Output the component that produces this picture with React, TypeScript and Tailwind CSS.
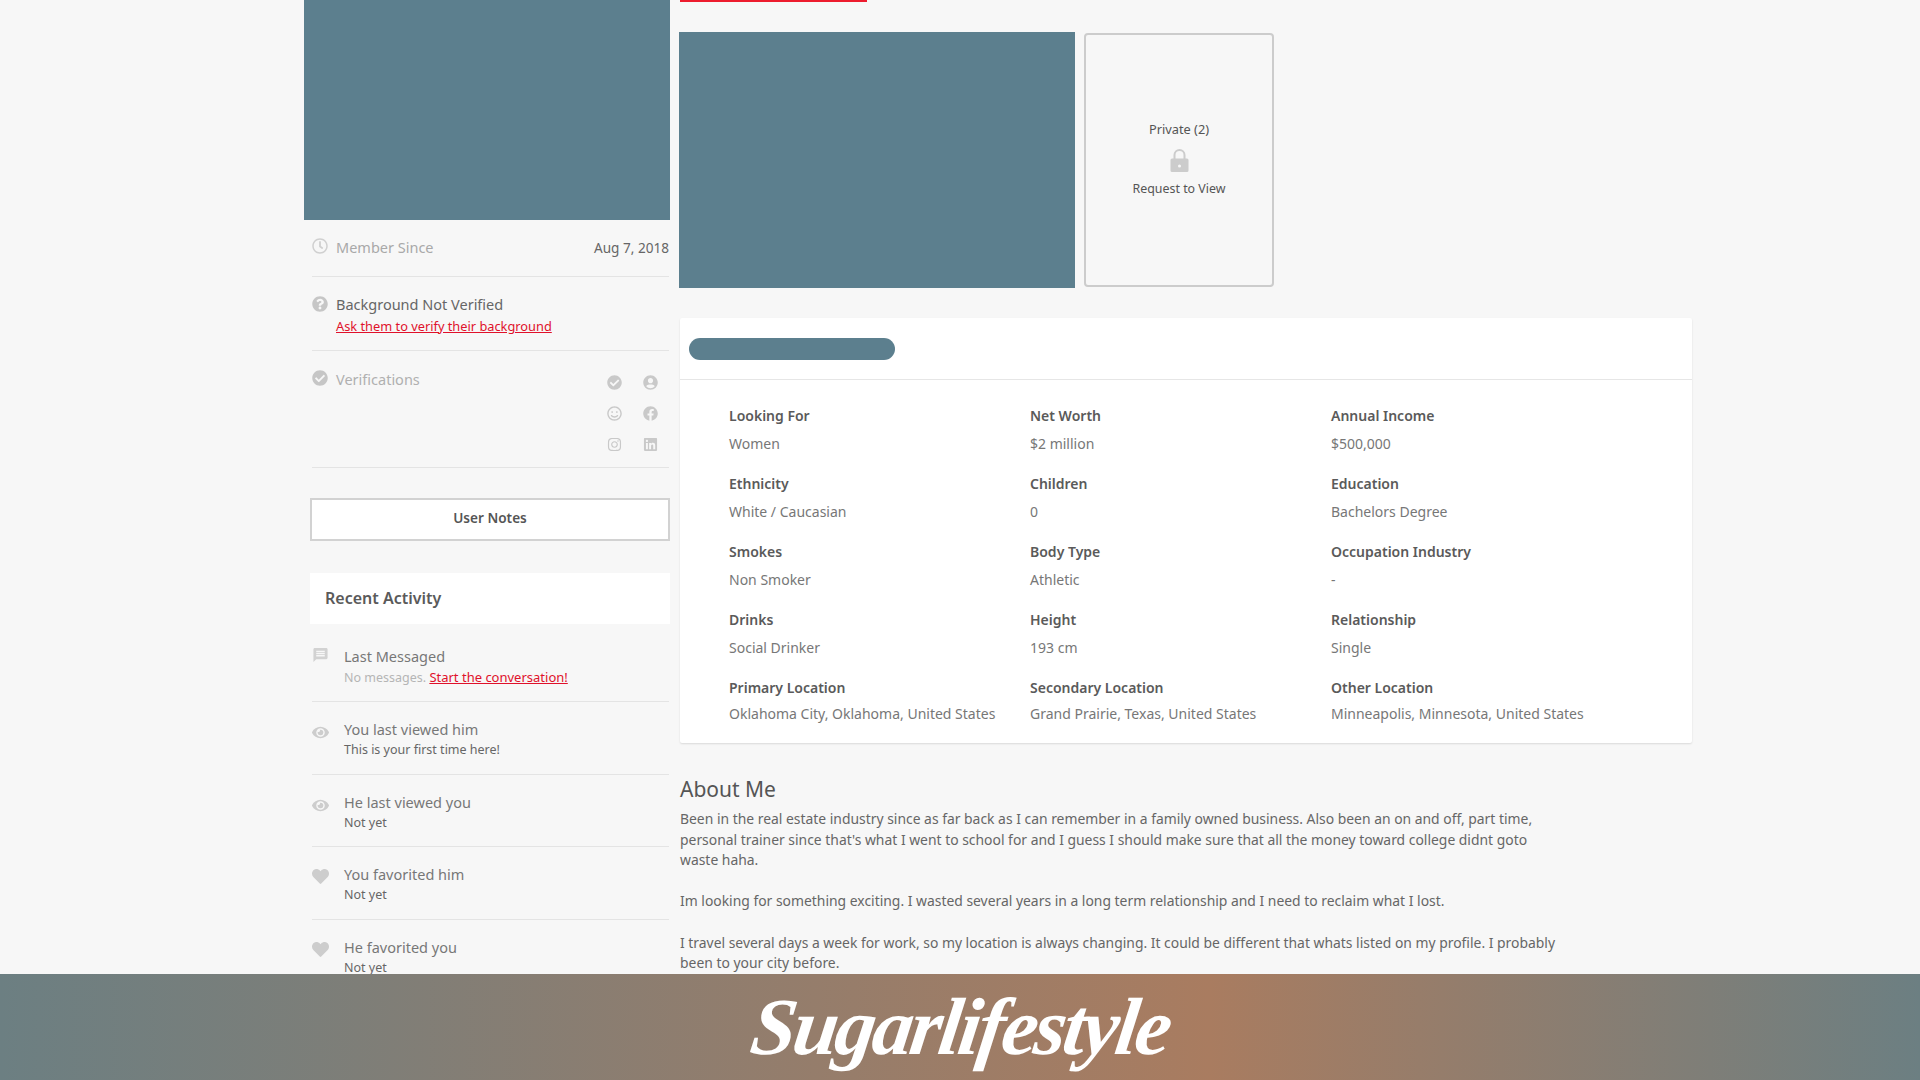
import { FaCheckCircle, FaEye, FaFacebook, FaHeart, FaInstagram, FaLinkedin, FaQuestionCircle, FaRegClock, FaRegSmile, FaUserCircle } from "react-icons/fa";
import { MdMessage } from "react-icons/md";

const details = [
  ["Looking For", "Women", "Net Worth", "$2 million", "Annual Income", "$500,000"],
  ["Ethnicity", "White / Caucasian", "Children", "0", "Education", "Bachelors Degree"],
  ["Smokes", "Non Smoker", "Body Type", "Athletic", "Occupation Industry", "-"],
  ["Drinks", "Social Drinker", "Height", "193 cm", "Relationship", "Single"],
  ["Primary Location", "Oklahoma City, Oklahoma, United States", "Secondary Location", "Grand Prairie, Texas, United States", "Other Location", "Minneapolis, Minnesota, United States"],
];

const activity = [
  { icon: <FaEye size={17} className="mt-[1px]" />, title: "You last viewed him", sub: "This is your first time here!" },
  { icon: <FaEye size={17} className="mt-[1px]" />, title: "He last viewed you", sub: "Not yet" },
  { icon: <FaHeart size={17} />, title: "You favorited him", sub: "Not yet" },
  { icon: <FaHeart size={17} />, title: "He favorited you", sub: "Not yet" },
];

function Sidebar() {
  return (
    <aside className="w-[366px] shrink-0">
      <div className="h-[220px] bg-[#5c7f8e]" />
      <div className="ml-[8px] mr-[1px]">
        <div className="flex h-[57px] items-center justify-between border-b border-[#e4e4e4]">
          <div className="flex items-center gap-[8px] text-[14.5px] text-[#a9a9a9]">
            <FaRegClock size={16} className="mb-[4px] text-[#d0d0d0]" />
            <span>Member Since</span>
          </div>
          <span className="text-[13.6px] text-[#666]">Aug 7, 2018</span>
        </div>
        <div className="flex h-[74px] items-start gap-[8px] border-b border-[#e4e4e4] pt-[19px]">
          <FaQuestionCircle size={16} className="text-[#c6c6c6]" />
          <div className="-mt-[2px]">
            <div className="text-[14.5px] leading-[21px] text-[#666]">Background Not Verified</div>
            <a className="mt-[1px] block text-[12.8px] leading-[21px] text-[#e0112b] underline">Ask them to verify their background</a>
          </div>
        </div>
        <div className="flex h-[117px] justify-between border-b border-[#e4e4e4] pt-[19px]">
          <div className="flex items-start gap-[8px] text-[14.5px] text-[#b0b0b0]">
            <FaCheckCircle size={16} className="text-[#c6c6c6]" />
            <span className="-mt-[1px]">Verifications</span>
          </div>
          <div className="mr-[11px] mt-[5px] grid grid-cols-2 gap-x-[21px] gap-y-[16px] self-start text-[#c9c9c9]">
            <FaCheckCircle size={15} />
            <FaUserCircle size={15} />
            <FaRegSmile size={15} />
            <FaFacebook size={15} />
            <FaInstagram size={15} />
            <FaLinkedin size={15} />
          </div>
        </div>
      </div>
      <div className="ml-[6px] mt-[30px] flex h-[43px] items-center justify-center border-2 border-[#d2d2d2] bg-white pb-[2px] text-[13.6px] font-semibold text-[#555]">User Notes</div>
      <div className="ml-[6px] mt-[32px] flex h-[51px] items-center bg-white pb-[1px] pl-[15px] text-[16px] font-semibold text-[#5a5a5a]">Recent Activity</div>
      <div className="ml-[8px] mr-[1px]">
        <div className="flex h-[78px] items-start gap-[15px] border-b border-[#e4e4e4] pt-[23px]">
          <MdMessage size={18} className="-mt-[1px] w-[17px] text-[#d2d2d2]" />
          <div className="-mt-[1px]">
            <div className="text-[14.5px] leading-[20px] text-[#777]">Last Messaged</div>
            <div className="mt-[1px] text-[12.5px] leading-[20px] text-[#b5b5b5]">No messages. <a className="text-[13px] text-[#e0112b] underline">Start the conversation!</a></div>
          </div>
        </div>
        {activity.map((a) => (
          <div key={a.title} className="flex h-[72.6px] items-start gap-[15px] border-b border-[#e4e4e4] pt-[18px] last:border-b-0">
            <div className="mt-[3px] w-[17px] text-[#cdcdcd]">{a.icon}</div>
            <div className="-mt-[1px]">
              <div className="text-[14.5px] leading-[20px] text-[#777]">{a.title}</div>
              <div className="mt-[1px] text-[12.5px] leading-[20px] text-[#666]">{a.sub}</div>
            </div>
          </div>
        ))}
      </div>
    </aside>
  );
}

function Content() {
  return (
    <main className="ml-[10px] w-[1012px]">
      <div className="h-[2px] w-[187px] bg-[#ed1c2e]" />
      <div className="-ml-[1px] mt-[30px] flex h-[256px] gap-[9px]">
        <div className="w-[396px] bg-[#5c7f8e]" />
        <div className="mt-[1px] flex h-[254px] w-[190px] flex-col items-center rounded-[4px] border-2 border-[#cccccc] pt-[85px] text-[12.8px] text-[#555]">
          <div className="leading-[18px]">Private (2)</div>
          <svg viewBox="0 0 19 23" className="mb-[8px] mt-[11px] h-[23px] w-[19px]" fill="none">
            <path d="M4.5 10V6a5 5 0 0 1 10 0v4" stroke="#cccccc" strokeWidth="2" />
            <path fillRule="evenodd" clipRule="evenodd" d="M2 9.500h15a1.500 1.500 0 0 1 1.500 1.500v10.500a1.500 1.500 0 0 1-1.500 1.500H2a1.500 1.500 0 0 1-1.500-1.500V11A1.500 1.500 0 0 1 2 9.500Zm7.500 6a1.500 1.500 0 1 0 0 3 1.500 1.500 0 0 0 0-3Z" fill="#cccccc" />
          </svg>
          <div className="text-[12.4px] leading-[18px]">Request to View</div>
        </div>
      </div>
      <section className="mt-[30px] h-[425px] rounded-[2px] bg-white shadow-[0_1px_2px_rgba(0,0,0,0.12)]">
        <div className="flex h-[62px] items-start border-b border-[#e6e6e6] pl-[9px] pt-[20px]">
          <div className="h-[22px] w-[206px] rounded-full bg-[#5c7f8e]" />
        </div>
        <div className="pl-[49px] pt-[25px]">
          {details.map((row, i) => (
            <div key={i} className={`grid grid-cols-[301px_301px_1fr] ${i === 4 ? "h-[58px]" : "h-[68px]"}`}>
              {[0, 2, 4].map((c) => (
                <div key={c}>
                  <div className="text-[14px] font-semibold leading-[22px] text-[#5a5a5a]">{row[c]}</div>
                  <div className={`${i === 4 ? "mt-[4px]" : "mt-[6px]"} whitespace-nowrap text-[14px] leading-[22px] text-[#777]`}>{row[c + 1]}</div>
                </div>
              ))}
            </div>
          ))}
        </div>
      </section>
      <h2 className="mt-[31px] text-[21px] leading-[30px] text-[#555]">About Me</h2>
      <p className="mt-[5px] whitespace-nowrap text-[13.9px] leading-[20.6px] text-[#666]">
        Been in the real estate industry since as far back as I can remember in a family owned business. Also been an on and off, part time,<br />
        personal trainer since that's what I went to school for and I guess I should make sure that all the money toward college didnt goto<br />
        waste haha.<br /><br />
        Im looking for something exciting. I wasted several years in a long term relationship and I need to reclaim what I lost.<br /><br />
        I travel several days a week for work, so my location is always changing. It could be different that whats listed on my profile. I probably<br />
        been to your city before.
      </p>
    </main>
  );
}

export default function App() {
  return (
    <div className="flex h-screen flex-col overflow-hidden bg-[#f7f7f7] font-['Noto_Sans','Open_Sans',sans-serif]">
      <div className="flex min-h-0 flex-1 overflow-hidden pl-[304px]">
        <Sidebar />
        <Content />
      </div>
      <footer className="flex h-[106px] shrink-0 items-center justify-center bg-[linear-gradient(90deg,#6c7f82_0%,#a97c60_63%,#6c7f82_100%)]">
        <span className="-skew-x-[8deg] font-['Liberation_Serif',serif] text-[81px] font-bold italic leading-none tracking-[-3px] text-white">Sugarlifestyle</span>
      </footer>
    </div>
  );
}
